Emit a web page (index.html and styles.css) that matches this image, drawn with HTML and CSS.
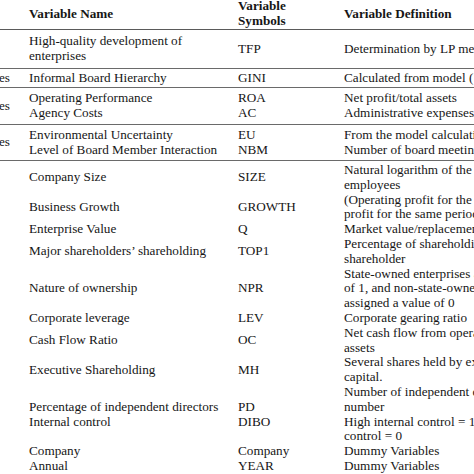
FILE: index.html
```html
<!DOCTYPE html>
<html lang="en">
<head>
<meta charset="utf-8">
<title>Variable definitions</title>
<link rel="stylesheet" href="styles.css">
</head>
<body>
<div class="table">
  <div class="row head">
    <div class="c0"></div>
    <div class="c1">Variable Name</div>
    <div class="c2">Variable<br>Symbols</div>
    <div class="c3">Variable Definition</div>
  </div>
  <div class="row sep r1">
    <div class="c0"></div>
    <div class="c1">High-quality development of<br>enterprises</div>
    <div class="c2">TFP</div>
    <div class="c3">Determination by LP method</div>
  </div>
  <div class="row sep r2">
    <div class="c0">Explanatory Variables</div>
    <div class="c1">Informal Board Hierarchy</div>
    <div class="c2">GINI</div>
    <div class="c3">Calculated from model (1)</div>
  </div>
  <div class="row sep r3">
    <div class="c0">Mediating Variables</div>
    <div class="c1">Operating Performance<br>Agency Costs</div>
    <div class="c2">ROA<br>AC</div>
    <div class="c3">Net profit/total assets<br>Administrative expenses/operating income</div>
  </div>
  <div class="row sep r4">
    <div class="c0">Moderating Variables</div>
    <div class="c1">Environmental Uncertainty<br>Level of Board Member Interaction</div>
    <div class="c2">EU<br>NBM</div>
    <div class="c3">From the model calculation (2)<br>Number of board meetings</div>
  </div>
  <div class="ctrl">
    <div class="row">
      <div class="c0"></div>
      <div class="c1">Company Size</div>
      <div class="c2">SIZE</div>
      <div class="c3">Natural logarithm of the number of<br>employees</div>
    </div>
    <div class="row">
      <div class="c0"></div>
      <div class="c1">Business Growth</div>
      <div class="c2">GROWTH</div>
      <div class="c3">(Operating profit for the current year − operating<br>profit for the same period last year)/operating profit</div>
    </div>
    <div class="row">
      <div class="c0"></div>
      <div class="c1">Enterprise Value</div>
      <div class="c2">Q</div>
      <div class="c3">Market value/replacement cost</div>
    </div>
    <div class="row">
      <div class="c0"></div>
      <div class="c1">Major shareholders’ shareholding</div>
      <div class="c2">TOP1</div>
      <div class="c3">Percentage of shareholding of the largest<br>shareholder</div>
    </div>
    <div class="row">
      <div class="c0"></div>
      <div class="c1">Nature of ownership</div>
      <div class="c2">NPR</div>
      <div class="c3">State-owned enterprises are assigned a value<br>of 1, and non-state-owned enterprises are<br>assigned a value of 0</div>
    </div>
    <div class="row">
      <div class="c0"></div>
      <div class="c1">Corporate leverage</div>
      <div class="c2">LEV</div>
      <div class="c3">Corporate gearing ratio</div>
    </div>
    <div class="row">
      <div class="c0"></div>
      <div class="c1">Cash Flow Ratio</div>
      <div class="c2">OC</div>
      <div class="c3">Net cash flow from operating activities/total<br>assets</div>
    </div>
    <div class="row">
      <div class="c0"></div>
      <div class="c1">Executive Shareholding</div>
      <div class="c2">MH</div>
      <div class="c3">Several shares held by executives/total share<br>capital.</div>
    </div>
    <div class="row bottom">
      <div class="c0"></div>
      <div class="c1">Percentage of independent directors</div>
      <div class="c2">PD</div>
      <div class="c3">Number of independent directors/total board<br>number</div>
    </div>
    <div class="row top">
      <div class="c0"></div>
      <div class="c1">Internal control</div>
      <div class="c2">DIBO</div>
      <div class="c3">High internal control = 1, low internal<br>control = 0</div>
    </div>
    <div class="row">
      <div class="c0"></div>
      <div class="c1">Company</div>
      <div class="c2">Company</div>
      <div class="c3">Dummy Variables</div>
    </div>
    <div class="row">
      <div class="c0"></div>
      <div class="c1">Annual</div>
      <div class="c2">YEAR</div>
      <div class="c3">Dummy Variables</div>
    </div>
  </div>
</div>
</body>
</html>
```

FILE: styles.css
```css
html, body {
  margin: 0;
  padding: 0;
  background: #ffffff;
  overflow: hidden;
}

body {
  width: 474px;
  height: 474px;
  font-family: "Liberation Serif", "Times New Roman", serif;
  font-size: 13.2px;
  line-height: 14.8px;
  color: #161616;
}

.table {
  width: 894px;
  margin-left: -150px;
  margin-top: -1px;
}

.row {
  display: grid;
  grid-template-columns: 160px 228px 106px 400px;
  align-items: center;
  box-sizing: border-box;
}

.c0 {
  text-align: right;
  white-space: nowrap;
  overflow: hidden;
}

.c1 {
  padding-left: 19px;
  white-space: nowrap;
}

.c2 {
  white-space: nowrap;
}

.c3 {
  white-space: nowrap;
}

.head {
  height: 31px;
  font-weight: bold;
  line-height: 14.6px;
  border-bottom: 1px solid #5a5a5a;
}

.sep {
  border-bottom: 1px solid #6a6a6a;
}

.r1 { height: 39px; }
.r2 { height: 19px; }
.r3 { height: 37px; }
.r4 { height: 36px; }

.ctrl {
  padding-top: 2px;
}

.bottom .c1,
.bottom .c2 {
  align-self: end;
}

.top .c1,
.top .c2 {
  align-self: start;
}
```
